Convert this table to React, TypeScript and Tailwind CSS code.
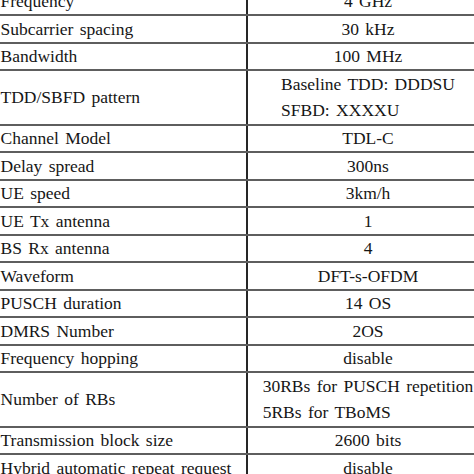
import React from "react";

type Row = { label: string; value: string | string[] };

const ROWS: Row[] = [
  { label: "Frequency", value: "4 GHz" },
  { label: "Subcarrier spacing", value: "30 kHz" },
  { label: "Bandwidth", value: "100 MHz" },
  { label: "TDD/SBFD pattern", value: ["Baseline TDD: DDDSU", "SFBD: XXXXU"] },
  { label: "Channel Model", value: "TDL-C" },
  { label: "Delay spread", value: "300ns" },
  { label: "UE speed", value: "3km/h" },
  { label: "UE Tx antenna", value: "1" },
  { label: "BS Rx antenna", value: "4" },
  { label: "Waveform", value: "DFT-s-OFDM" },
  { label: "PUSCH duration", value: "14 OS" },
  { label: "DMRS Number", value: "2OS" },
  { label: "Frequency hopping", value: "disable" },
  { label: "Number of RBs", value: ["30RBs for PUSCH repetition", "5RBs for TBoMS"] },
  { label: "Transmission block size", value: "2600 bits" },
  { label: "Hybrid automatic repeat request", value: "disable" },
];

export default function App() {
  return (
    <div
      className="h-[474px] w-[474px] overflow-hidden bg-white text-[17.5px] text-[#161616]"
      style={{ fontFamily: '"Liberation Serif", "Times New Roman", serif', wordSpacing: "2px" }}
    >
      <div className="mt-[-11.5px] w-[488px]">
        {ROWS.map((row) => {
          const multi = Array.isArray(row.value);
          return (
            <div
              key={row.label}
              className={`flex border-b-2 border-[#5e5e5e] ${multi ? "h-[54.5px]" : "h-[27.5px]"}`}
            >
              <div className="flex w-[248px] shrink-0 items-center whitespace-nowrap border-r-2 border-[#262626] pl-[0.5px]">
                {row.label}
              </div>
              <div className="flex flex-1 items-center justify-center whitespace-nowrap">
                {multi ? (
                  <div className="flex flex-col text-left leading-[26px]">
                    {(row.value as string[]).map((line) => (
                      <span key={line}>{line}</span>
                    ))}
                  </div>
                ) : (
                  <span>{row.value}</span>
                )}
              </div>
            </div>
          );
        })}
      </div>
    </div>
  );
}
